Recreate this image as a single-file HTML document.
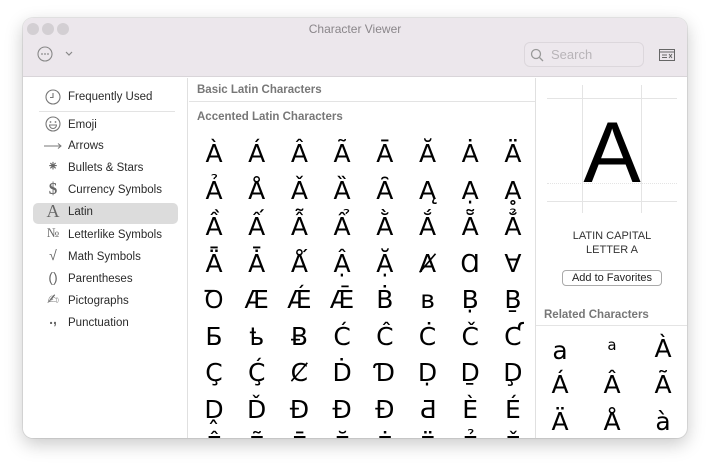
<!DOCTYPE html>
<html><head><meta charset="utf-8"><style>
*{margin:0;padding:0;box-sizing:border-box}
body{width:710px;height:466px;background:#fff;font-family:"Liberation Sans","DejaVu Sans",sans-serif;position:relative;overflow:hidden}
.win{position:absolute;left:23px;top:18px;width:664px;height:420px;border-radius:10px;background:#fff;box-shadow:0 0 0 1px rgba(0,0,0,.08),0 6px 18px rgba(0,0,0,.22);overflow:hidden}
.tb{position:absolute;left:0;top:0;width:664px;height:59px;background:#ece7ec;border-bottom:1px solid #d9d5d9}
.dot{position:absolute;top:5px;width:12px;height:12px;border-radius:50%;background:#d3cfd3}
.title{position:absolute;top:4px;left:0;width:664px;text-align:center;font-size:12px;color:#8a868a}
.side{position:absolute;left:0;top:60px;width:165px;height:360px;background:#fff;border-right:1px solid #e0e0e0}
.it{position:absolute;left:45px;font-size:11.5px;color:#2a2a2a}
.ic{position:absolute;left:20px;width:20px;text-align:center;color:#666;font-size:14px}
.sel{position:absolute;left:10px;top:125px;width:145px;height:21px;background:#dcdcdc;border-radius:5px}
.mid{position:absolute;left:166px;top:60px;width:346px;height:360px}
.hd{position:absolute;left:8px;font-size:11.5px;color:#777;font-weight:bold}
.g{position:absolute;width:42px;text-align:center;font-size:25px;line-height:30px;color:#000;font-family:"DejaVu Sans","Liberation Sans",sans-serif}
.right{position:absolute;left:512px;top:60px;width:152px;height:360px;border-left:1px solid #e0e0e0}
.ln{position:absolute;background:#e4e4e4}
</style></head><body>
<div class="win">
<div class="tb">
<div class="dot" style="left:4px"></div><div class="dot" style="left:19px"></div><div class="dot" style="left:34px"></div>
<div class="title">Character Viewer</div>
<svg style="position:absolute;left:14px;top:28px" width="16" height="16"><circle cx="8" cy="8" r="7" fill="none" stroke="#888" stroke-width="1.1"/><circle cx="5" cy="8" r=".9" fill="#888"/><circle cx="8" cy="8" r=".9" fill="#888"/><circle cx="11" cy="8" r=".9" fill="#888"/></svg>
<svg style="position:absolute;left:42px;top:33px" width="8" height="6"><path d="M1 1l3 3 3-3" fill="none" stroke="#888" stroke-width="1.2"/></svg>
<div style="position:absolute;left:501px;top:24px;width:120px;height:25px;border:1px solid #dcd7dc;border-radius:6px;background:#ede8ed"></div>
<svg style="position:absolute;left:507px;top:30px" width="14" height="14"><circle cx="6" cy="6" r="4.5" fill="none" stroke="#999" stroke-width="1.3"/><line x1="9.5" y1="9.5" x2="13" y2="13" stroke="#999" stroke-width="1.3"/></svg>
<div style="position:absolute;left:528px;top:29px;font-size:13px;color:#b8b4b8">Search</div>
<svg style="position:absolute;left:636px;top:31px" width="16" height="12"><rect x=".5" y=".5" width="15" height="11" fill="none" stroke="#666"/><line x1="1" y1="3" x2="15" y2="3" stroke="#666"/><line x1="3" y1="6" x2="8" y2="6" stroke="#666"/><line x1="3" y1="8.5" x2="8" y2="8.5" stroke="#666"/><path d="M10 5l3 4M13 5l-3 4" stroke="#666"/></svg>
</div>
<div class="side">
<div class="sel"></div>
<svg style="position:absolute;left:22px;top:11px" width="16" height="16"><circle cx="8" cy="8" r="7" fill="none" stroke="#777" stroke-width="1.1"/><path d="M8 4v4.5H5" fill="none" stroke="#777" stroke-width="1.1"/></svg>
<div class="it" style="top:13px">Frequently Used</div>
<div style="position:absolute;left:16px;top:33px;width:136px;height:1px;background:#e3e3e3"></div>
<svg style="position:absolute;left:22px;top:38px" width="16" height="16"><circle cx="8" cy="8" r="7" fill="none" stroke="#777" stroke-width="1.1"/><circle cx="5.5" cy="6" r=".9" fill="#777"/><circle cx="10.5" cy="6" r=".9" fill="#777"/><path d="M4.5 9h7a3.5 3.5 0 0 1-7 0z" fill="none" stroke="#777"/></svg>
<div class="it" style="top:41px">Emoji</div>
<svg style="position:absolute;left:20px;top:64px" width="20" height="8"><path d="M1 4h17M15 1.5l3 2.5-3 2.5" fill="none" stroke="#777" stroke-width="1"/></svg><div class="it" style="top:62px">Arrows</div>
<div class="ic" style="top:80px">⁕</div><div class="it" style="top:84px">Bullets &amp; Stars</div>
<div class="ic" style="top:101px;font-family:'Liberation Serif',serif;font-size:17px;font-weight:bold">$</div><div class="it" style="top:106px">Currency Symbols</div>
<div class="ic" style="top:123px;font-family:'Liberation Serif',serif;font-size:18px">A</div><div class="it" style="top:128px">Latin</div>
<div class="ic" style="top:147px;font-family:'Liberation Serif',serif;font-size:13px">№</div><div class="it" style="top:151px">Letterlike Symbols</div>
<div class="ic" style="top:169px">√</div><div class="it" style="top:173px">Math Symbols</div>
<div class="ic" style="top:191px">()</div><div class="it" style="top:195px">Parentheses</div>
<div class="ic" style="top:213px">✍</div><div class="it" style="top:217px">Pictographs</div>
<div class="ic" style="top:233px;font-weight:bold">.,</div><div class="it" style="top:239px">Punctuation</div>
</div>
<div class="mid">
<div class="hd" style="top:6px">Basic Latin Characters</div>
<div style="position:absolute;left:0;top:23px;width:346px;height:1px;background:#e3e3e3"></div>
<div class="hd" style="top:33px">Accented Latin Characters</div>
<div id="grid"></div>
</div>
<div class="right">
<div class="ln" style="left:11px;top:20px;width:130px;height:1px"></div>
<div class="ln" style="left:11px;top:123px;width:130px;height:1px"></div>
<div style="position:absolute;left:11px;top:105px;width:130px;border-top:1px dotted #e4e4e4"></div>
<div class="ln" style="left:46px;top:7px;width:1px;height:128px"></div>
<div class="ln" style="left:105px;top:7px;width:1px;height:128px"></div>
<div style="position:absolute;left:0;top:32px;width:152px;text-align:center;font-size:86px;line-height:86px;color:#000">A</div>
<div style="position:absolute;left:0;top:151px;width:152px;text-align:center;font-size:11px;line-height:14px;color:#333">LATIN CAPITAL<br>LETTER A</div>
<div style="position:absolute;left:26px;top:192px;width:100px;height:16px;border:1px solid #aaa;border-radius:4px;font-size:11px;line-height:14px;text-align:center;color:#222">Add to Favorites</div>
<div style="position:absolute;left:8px;top:231px;font-size:11.5px;font-weight:bold;color:#777">Related Characters</div>
<div class="ln" style="left:0;top:247px;width:152px;height:1px"></div>
<div class="g" style="left:3px;top:258px">a</div><div class="g" style="left:55px;top:252px;font-size:15px">a</div><div class="g" style="left:106px;top:256px">À</div>
<div class="g" style="left:3px;top:292px">Á</div><div class="g" style="left:55px;top:292px">Â</div><div class="g" style="left:106px;top:292px">Ã</div>
<div class="g" style="left:3px;top:329px">Ä</div><div class="g" style="left:55px;top:329px">Å</div><div class="g" style="left:106px;top:329px">à</div>
</div>
</div>
<script>
var rows=["ÀÁÂÃĀĂȦÄ","ẢÅǍȀȂĄẠḀ","ẦẤẪẨẰẮẴẲ","ǞǠǺẬẶȺⱭⱯ","ꝹÆǼǢḂʙḄḆ","БҍɃĆĈĊČƇ","ÇḈȻḊƊḌḎḐ","ḒĎĐÐƉƋÈÉ","ÊẼĒĔĖËẺĚ"];
var h="";rows.forEach(function(r,i){Array.from(r).forEach(function(c,j){h+='<div class="g" style="left:'+(4+j*42.7)+'px;top:'+(61+i*36.5)+'px">'+c+'</div>';});});
document.getElementById("grid").innerHTML=h;
</script>
</body></html>
